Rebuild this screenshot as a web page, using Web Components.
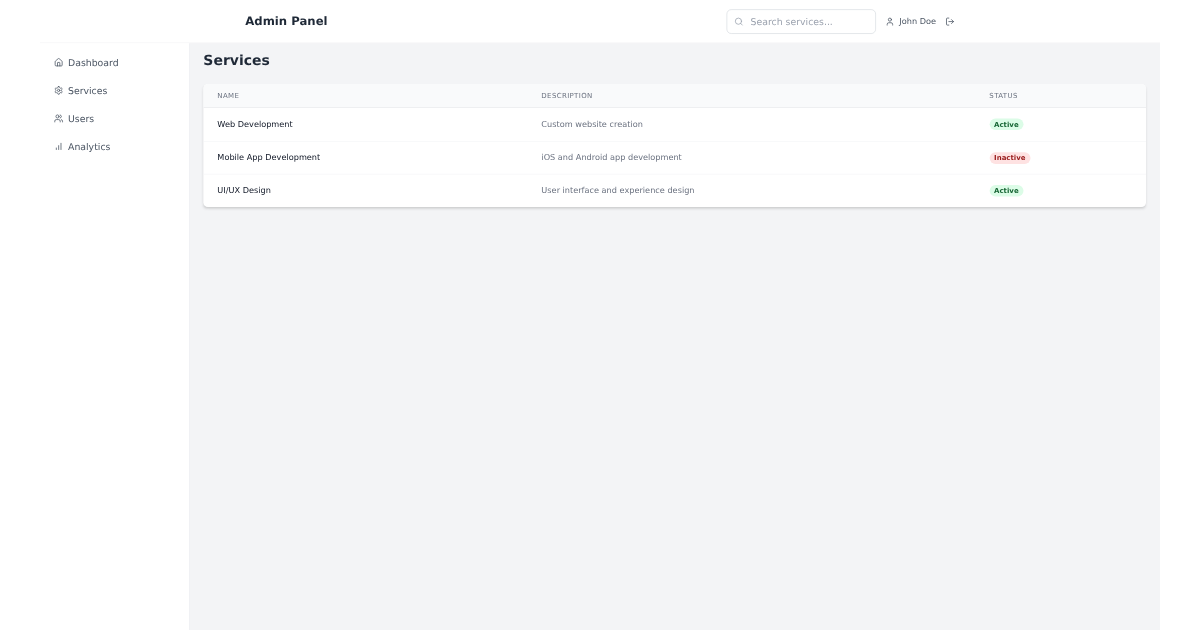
<!DOCTYPE html>
<html>
<head>
<meta charset="utf-8">
<title>Admin Panel</title>
<style>
  html, body { margin: 0; height: 100%; background: #fff; overflow: hidden; }
  body { font-family: "DejaVu Sans", sans-serif; color: #1f2937; text-rendering: geometricPrecision; }
</style>
</head>
<body>
<admin-app></admin-app>

<script>
const ICONS = {
  home: '<path d="M15 21v-8a1 1 0 0 0-1-1h-4a1 1 0 0 0-1 1v8"/><path d="M3 10a2 2 0 0 1 .709-1.528l7-5.999a2 2 0 0 1 2.582 0l7 5.999A2 2 0 0 1 21 10v9a2 2 0 0 1-2 2H5a2 2 0 0 1-2-2z"/>',
  gear: '<path d="M12.22 2h-.44a2 2 0 0 0-2 2v.18a2 2 0 0 1-1 1.73l-.43.25a2 2 0 0 1-2 0l-.15-.08a2 2 0 0 0-2.73.73l-.22.38a2 2 0 0 0 .73 2.73l.15.1a2 2 0 0 1 1 1.72v.51a2 2 0 0 1-1 1.74l-.15.09a2 2 0 0 0-.73 2.73l.22.38a2 2 0 0 0 2.73.73l.15-.08a2 2 0 0 1 2 0l.43.25a2 2 0 0 1 1 1.73V20a2 2 0 0 0 2 2h.44a2 2 0 0 0 2-2v-.18a2 2 0 0 1 1-1.73l.43-.25a2 2 0 0 1 2 0l.15.08a2 2 0 0 0 2.73-.73l.22-.39a2 2 0 0 0-.73-2.73l-.15-.08a2 2 0 0 1-1-1.74v-.5a2 2 0 0 1 1-1.74l.15-.09a2 2 0 0 0 .73-2.73l-.22-.38a2 2 0 0 0-2.73-.73l-.15.08a2 2 0 0 1-2 0l-.43-.25a2 2 0 0 1-1-1.73V4a2 2 0 0 0-2-2z"/><circle cx="12" cy="12" r="3"/>',
  users: '<path d="M16 21v-2a4 4 0 0 0-4-4H6a4 4 0 0 0-4 4v2"/><circle cx="9" cy="7" r="4"/><path d="M22 21v-2a4 4 0 0 0-3-3.87"/><path d="M16 3.13a4 4 0 0 1 0 7.75"/>',
  chart: '<path d="M12 20V10"/><path d="M18 20V4"/><path d="M6 20v-4"/>',
  search: '<circle cx="11" cy="11" r="8"/><path d="m21 21-4.3-4.3"/>',
  user: '<path d="M19 21v-2a4 4 0 0 0-4-4H9a4 4 0 0 0-4 4v2"/><circle cx="12" cy="7" r="4"/>',
  logout: '<path d="M9 21H5a2 2 0 0 1-2-2V5a2 2 0 0 1 2-2h4"/><path d="m16 17 5-5-5-5"/><path d="M21 12H9"/>'
};

class AppIcon extends HTMLElement {
  connectedCallback() {
    const size = this.getAttribute("size") || 16;
    const name = this.getAttribute("name");
    this.attachShadow({ mode: "open" }).innerHTML = `
      <style>
        :host { display: inline-flex; flex: none; }
        svg { display: block; }
      </style>
      <svg width="${size}" height="${size}" viewBox="0 0 24 24" fill="none" stroke="currentColor" stroke-width="2" stroke-linecap="round" stroke-linejoin="round">${ICONS[name]}</svg>`;
  }
}
customElements.define("app-icon", AppIcon);

class TopBar extends HTMLElement {
  connectedCallback() {
    this.attachShadow({ mode: "open" }).innerHTML = `
      <style>
        :host { display: block; background: #fff; border-bottom: 1px solid #f0f1f3; }
        .inner { max-width: 1216px; height: 73px; margin: 0 auto; display: flex; align-items: center; justify-content: space-between; }
        h1 { margin: 0 0 2px; font-size: 20px; line-height: 28px; font-weight: 700; color: #1f2937; }
        .tools { display: flex; align-items: center; gap: 16px; }
        .search { width: 256px; height: 42px; box-sizing: border-box; border: 1px solid #d1d5db; border-radius: 8px; display: flex; align-items: center; padding-left: 12px; gap: 12px; color: #9ca3af; font-size: 16px; }
        .search span { padding-top: 1px; }
        .user { display: flex; align-items: center; gap: 8px; color: #4b5563; font-size: 14px; }
        .user app-icon, .out { color: #4b5563; }
        .out { display: flex; }
      </style>
      <div class="inner">
        <h1>Admin Panel</h1>
        <div class="tools">
          <div class="search"><app-icon name="search" size="16"></app-icon><span>Search services...</span></div>
          <div class="user"><app-icon name="user" size="16"></app-icon><span>John Doe</span></div>
          <div class="out"><app-icon name="logout" size="16"></app-icon></div>
        </div>
      </div>`;
  }
}
customElements.define("top-bar", TopBar);

class NavItem extends HTMLElement {
  connectedCallback() {
    this.attachShadow({ mode: "open" }).innerHTML = `
      <style>
        :host { display: flex; align-items: center; gap: 8px; height: 48px; padding-left: 24px; font-size: 16px; color: #4b5563; }
      </style>
      <app-icon name="${this.getAttribute("icon")}" size="16"></app-icon><slot></slot>`;
  }
}
customElements.define("nav-item", NavItem);

class SideNav extends HTMLElement {
  connectedCallback() {
    this.attachShadow({ mode: "open" }).innerHTML = `
      <style>
        :host { display: block; width: 256px; flex: none; background: #fff; border-right: 1px solid #e5e7eb; padding-top: 9px; }
      </style>
      <nav>
        <nav-item icon="home">Dashboard</nav-item>
        <nav-item icon="gear">Services</nav-item>
        <nav-item icon="users">Users</nav-item>
        <nav-item icon="chart">Analytics</nav-item>
      </nav>`;
  }
}
customElements.define("side-nav", SideNav);

class StatusBadge extends HTMLElement {
  connectedCallback() {
    const on = this.getAttribute("state") === "active";
    this.attachShadow({ mode: "open" }).innerHTML = `
      <style>
        :host { display: inline-block; line-height: 20px; padding: 0 8px; border-radius: 10px; font-size: 12px; font-weight: 700; background: ${on ? "#dcfce7" : "#fee2e2"}; color: ${on ? "#166534" : "#991b1b"}; }
      </style>
      <slot></slot>`;
  }
}
customElements.define("status-badge", StatusBadge);

class ServiceTable extends HTMLElement {
  connectedCallback() {
    this.attachShadow({ mode: "open" }).innerHTML = `
      <style>
        :host { display: block; background: #fff; border-radius: 8px; overflow: hidden; box-shadow: 0 3px 5px -1px rgba(0,0,0,.09), 0 2px 4px -2px rgba(0,0,0,.09); }
        .row { display: grid; grid-template-columns: 555.5px 768px 1fr; padding-left: 24px; align-items: center; height: 56.7px; box-sizing: border-box; border-top: 1px solid #f3f4f6; font-size: 14px; color: #6b7280; }
        .head { height: 41px; background: #f9fafb; border-top: 0; border-bottom: 1px solid #e5e7eb; font-size: 12px; letter-spacing: .6px; }
        .first { border-top: 0; }
        .name { color: #111827; }
      </style>
      <div class="row head"><span>NAME</span><span>DESCRIPTION</span><span>STATUS</span></div>
      <div class="row first"><span class="name">Web Development</span><span>Custom website creation</span><span><status-badge state="active">Active</status-badge></span></div>
      <div class="row"><span class="name">Mobile App Development</span><span>iOS and Android app development</span><span><status-badge state="inactive">Inactive</status-badge></span></div>
      <div class="row"><span class="name">UI/UX Design</span><span>User interface and experience design</span><span><status-badge state="active">Active</status-badge></span></div>`;
  }
}
customElements.define("service-table", ServiceTable);

// the whole screen is a 1920x1080 layout shrunk to 1120x630
class AdminApp extends HTMLElement {
  connectedCallback() {
    this.attachShadow({ mode: "open" }).innerHTML = `
      <style>
        :host { display: block; width: 1120px; height: 630px; margin-left: 40px; overflow: hidden; filter: blur(.3px); }
        .stage { display: flex; flex-direction: column; width: 1920px; height: 1080px; transform: scale(.583333); transform-origin: 0 0; }
        .body { flex: 1; display: flex; }
        main { flex: 1; background: #f3f4f6; padding: 14px 24px 0 23px; }
        h2 { margin: 0 0 24px; font-size: 24px; line-height: 32px; font-weight: 700; color: #1f2937; }
      </style>
      <div class="stage">
        <top-bar></top-bar>
        <div class="body">
          <side-nav></side-nav>
          <main>
            <h2>Services</h2>
            <service-table></service-table>
          </main>
        </div>
      </div>`;
  }
}
customElements.define("admin-app", AdminApp);
</script>
</body>
</html>
